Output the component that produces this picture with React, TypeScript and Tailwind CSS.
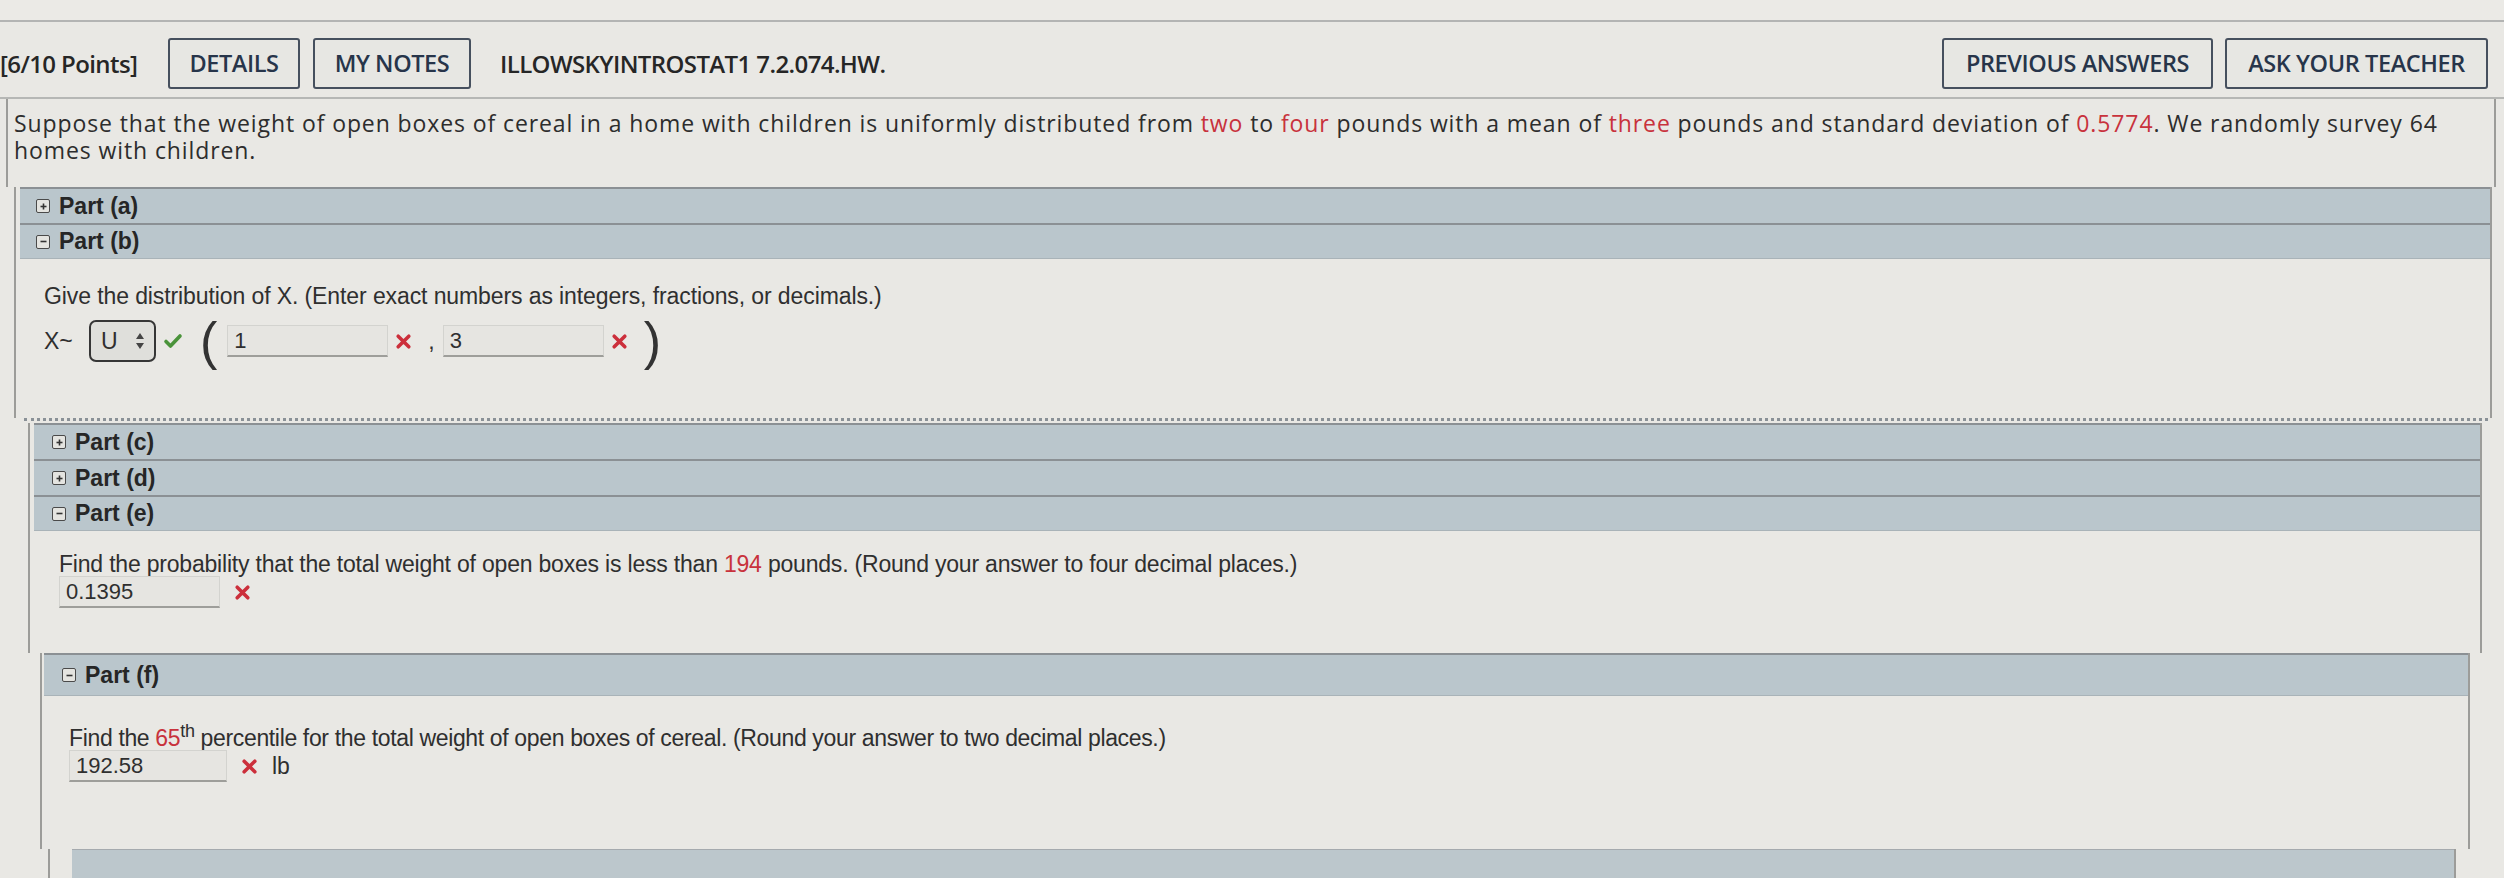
import React from 'react'

// ─── Small pieces ─────────────────────────────────────────────────────────────

const RED = 'text-[#c8323c]'

function BoxIcon({ open }: { open: boolean }) {
  return (
    <span className="inline-flex h-[14px] w-[14px] items-center justify-center rounded-[2px] border-[1.5px] border-[#4a4a4a] bg-[#e4e4e0]">
      <svg width="9" height="9" viewBox="0 0 9 9">
        <path d="M1.5 4.5h6" stroke="#333" strokeWidth="1.6" />
        {!open && <path d="M4.5 1.5v6" stroke="#333" strokeWidth="1.6" />}
      </svg>
    </span>
  )
}

function PartBar({
  label,
  open,
  pl = 'pl-[16px]',
  h = 'h-[36px]',
  last = false,
}: {
  label: string
  open: boolean
  pl?: string
  h?: string
  last?: boolean
}) {
  return (
    <div
      className={`flex ${h} items-center gap-[9px] border-t-2 border-[#8b9094] bg-[#bac6cc] ${pl} ${last ? 'border-b border-b-[#a9b3b8]' : ''}`}
    >
      <BoxIcon open={open} />
      <span className="font-['Liberation_Sans',Arial,sans-serif] text-[23px] font-bold text-[#262626]">{label}</span>
    </div>
  )
}

function WrongX() {
  return (
    <svg width="17" height="17" viewBox="0 0 16 16" className="shrink-0">
      <path d="M3 3l10 10M13 3L3 13" stroke="#cc2f3b" strokeWidth="3.4" strokeLinecap="round" />
    </svg>
  )
}

function Answer({ value, w = 'w-[161px]' }: { value: string; w?: string }) {
  return (
    <div
      className={`flex h-[32px] ${w} shrink-0 items-center border border-[#d3d3cf] border-b-2 border-b-[#9e9e9a] bg-[#e6e5e1] px-[6px] text-[22px] text-[#2f2f2f]`}
    >
      {value}
    </div>
  )
}

function OutlineButton({ children, w }: { children: React.ReactNode; w: string }) {
  return (
    <button
      className={`flex h-[51px] ${w} items-center justify-center rounded-[3px] border-2 border-[#46505e] bg-[#e7e7e3] text-[23.5px] font-semibold tracking-[-0.4px] text-[#27354a]`}
    >
      {children}
    </button>
  )
}

// ─── Page ─────────────────────────────────────────────────────────────────────

export default function App() {
  return (
    <div className="h-[878px] w-full overflow-hidden bg-[#e9e8e4] font-['Open_Sans',sans-serif] text-[#2d2d2d]">
      {/* strip above the question */}
      <div className="h-[22px] border-b-2 border-[#b3b4b3] bg-[#ebeae6]" />

      {/* header row */}
      <div className="flex h-[77px] items-center border-b-2 border-[#b6b7b5] pr-[16px] pt-[8px]">
        <span className="w-[168px] whitespace-nowrap text-[24px] font-semibold tracking-[-0.6px] text-[#262626]">
          [6/10 Points]
        </span>
        <div className="flex gap-[13px]">
          <OutlineButton w="w-[132px]">DETAILS</OutlineButton>
          <OutlineButton w="w-[158px]">MY NOTES</OutlineButton>
        </div>
        <span className="ml-[29px] text-[24px] font-semibold tracking-[-0.6px] text-[#262626]">
          ILLOWSKYINTROSTAT1 7.2.074.HW.
        </span>
        <div className="ml-auto flex gap-[12px]">
          <OutlineButton w="w-[271px]">PREVIOUS ANSWERS</OutlineButton>
          <OutlineButton w="w-[263px]">ASK YOUR TEACHER</OutlineButton>
        </div>
      </div>

      {/* question stem */}
      <div className="ml-[6px] mr-[8px] h-[88px] border-x-2 border-[#9c9c99] pl-[6px] pt-[11px] text-[23px] leading-[27px] tracking-[0.9px] text-[#2d2d2d]">
        <p className="whitespace-nowrap">
          Suppose that the weight of open boxes of cereal in a home with children is uniformly distributed from{' '}
          <span className={RED}>two</span> to <span className={RED}>four</span> pounds with a mean of{' '}
          <span className={RED}>three</span> pounds and standard deviation of <span className={RED}>0.5774</span>. We
          randomly survey 64
        </p>
        <p>homes with children.</p>
      </div>

      {/* parts (a), (b) */}
      <div className="ml-[14px] mr-[12px] border-x-2 border-[#9c9c99] pl-[4px] font-['Liberation_Sans',Arial,sans-serif]">
        <PartBar label="Part (a)" open={false} />
        <PartBar label="Part (b)" open last />
        <div className="h-[159px] pl-[24px] pt-[24px] text-[23px] text-[#2f2f2f]">
          <p className="leading-[26px] tracking-[-0.1px]">
            Give the distribution of X. (Enter exact numbers as integers, fractions, or decimals.)
          </p>
          <div className="mt-[6px] flex items-center">
            <span className="w-[45px]">X~</span>
            <div className="flex h-[42px] w-[67px] items-center justify-between rounded-[7px] border-2 border-[#363636] bg-[#dfdfdb] pl-[10px] pr-[9px]">
              <span>U</span>
              <svg width="10" height="18" viewBox="0 0 10 18">
                <path d="M5 1L9 7H1z M5 17L1 11h8z" fill="#444" />
              </svg>
            </div>
            <svg width="20" height="16" viewBox="0 0 20 16" className="ml-[7px]">
              <path
                d="M3 8.5l4.5 4.5L17 3"
                stroke="#4a933a"
                strokeWidth="3.6"
                fill="none"
                strokeLinecap="round"
                strokeLinejoin="round"
              />
            </svg>
            <span className="ml-[17px] mr-[10px] text-[52px] font-extralight leading-none text-[#333]">(</span>
            <Answer value="1" />
            <span className="ml-[7px]">
              <WrongX />
            </span>
            <span className="ml-[16px] mr-[8px]">,</span>
            <Answer value="3" />
            <span className="ml-[7px]">
              <WrongX />
            </span>
            <span className="ml-[16px] text-[52px] font-extralight leading-none text-[#333]">)</span>
          </div>
        </div>
      </div>

      {/* dotted separator */}
      <div className="ml-[24px] mr-[16px] h-[5px] border-t-[3px] border-dotted border-[#8a9197]" />

      {/* parts (c), (d), (e) */}
      <div className="ml-[28px] mr-[22px] border-x-2 border-[#9c9c99] pl-[4px] font-['Liberation_Sans',Arial,sans-serif]">
        <PartBar label="Part (c)" open={false} pl="pl-[18px]" />
        <PartBar label="Part (d)" open={false} pl="pl-[18px]" />
        <PartBar label="Part (e)" open pl="pl-[18px]" last />
        <div className="h-[122px] pl-[25px] pt-[21px] text-[23px] text-[#2f2f2f]">
          <p className="leading-[24px] tracking-[-0.2px]">
            Find the probability that the total weight of open boxes is less than <span className={RED}>194</span>{' '}
            pounds. (Round your answer to four decimal places.)
          </p>
          <div className="flex items-center gap-[14px]">
            <Answer value="0.1395" />
            <WrongX />
          </div>
        </div>
      </div>

      {/* part (f) */}
      <div className="ml-[40px] mr-[34px] border-x-2 border-[#9c9c99] pl-[2px] font-['Liberation_Sans',Arial,sans-serif]">
        <PartBar label="Part (f)" open pl="pl-[18px]" h="h-[43px]" last />
        <div className="h-[153px] pl-[25px] pt-[30px] text-[23px] text-[#2f2f2f]">
          <p className="leading-[24px] tracking-[-0.35px]">
            Find the <span className={RED}>65</span>
            <sup className="text-[18px]">th</sup> percentile for the total weight of open boxes of cereal. (Round your
            answer to two decimal places.)
          </p>
          <div className="-mt-[1px] flex items-center">
            <Answer value="192.58" w="w-[158px]" />
            <span className="ml-[14px]">
              <WrongX />
            </span>
            <span className="ml-[14px]">lb</span>
          </div>
        </div>
      </div>

      {/* next question (cut off) */}
      <div className="ml-[48px] mr-[48px] h-[40px] border-x-2 border-[#9c9c99] pl-[22px]">
        <div className="h-full border-t border-[#a5aaae] bg-[#bcc7cc]" />
      </div>
    </div>
  )
}
